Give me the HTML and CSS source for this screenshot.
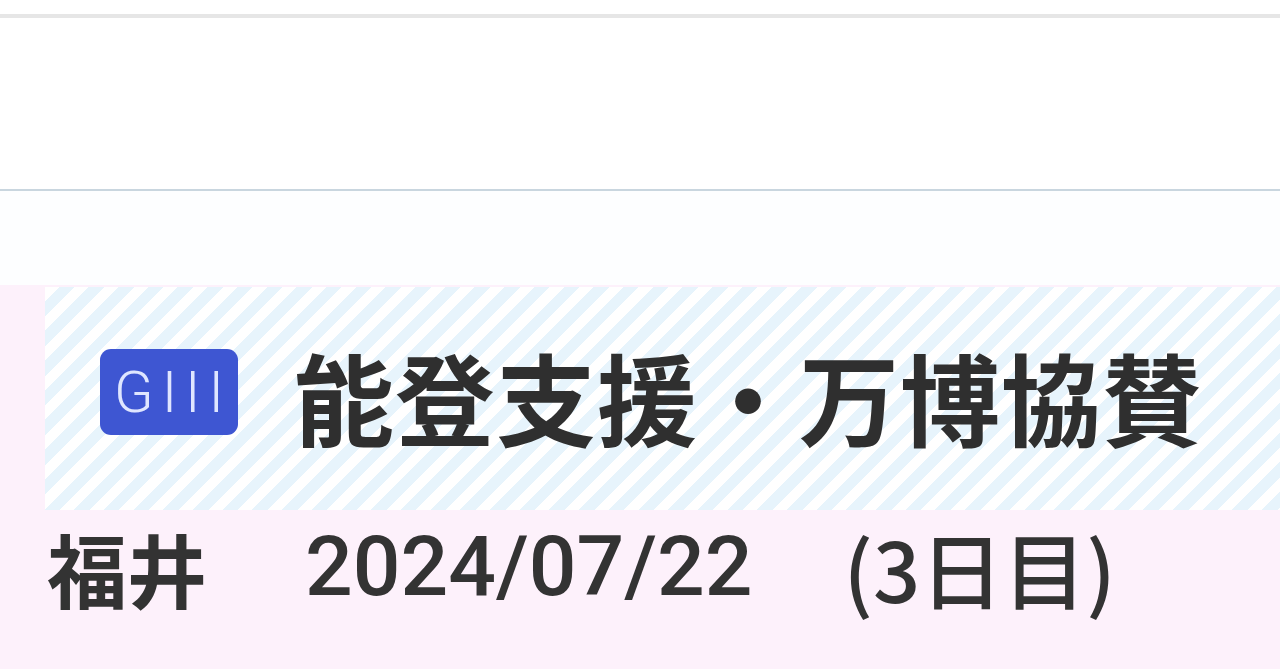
FILE: index.html
```html
<!DOCTYPE html>
<html lang="ja">
<head>
<meta charset="utf-8">
<title>能登支援・万博協賛</title>
<link rel="stylesheet" href="styles.css">
</head>
<body>
  <div class="topbar"></div>
  <div class="header"></div>
  <div class="gap"></div>
  <section class="race">
    <div class="banner">
      <span class="grade">GIII</span>
      <h1 class="title">能登支援・万博協賛</h1>
    </div>
    <div class="info">
      <span class="place">福井</span>
      <span class="date">2024/07/22</span>
      <span class="day">(3日目)</span>
    </div>
  </section>
</body>
</html>
```

FILE: styles.css
```css
html, body {
  margin: 0;
  padding: 0;
  background: #ffffff;
  font-family: "Noto Sans CJK JP", "Noto Sans", sans-serif;
  color: #333333;
  overflow: hidden;
}

.topbar {
  height: 14px;
  border-bottom: 4px solid #e6e6e6;
}

.header {
  height: 171px;
  border-bottom: 2px solid #c9d6df;
}

.gap {
  height: 94px;
  background: #fdfeff;
}

.race {
  background: #fdf1fb;
  height: 384px;
  padding-top: 2px;
  box-sizing: border-box;
}

.banner {
  margin-left: 45px;
  height: 223px;
  display: flex;
  align-items: center;
  padding-left: 55px;
  background: repeating-linear-gradient(
    135deg,
    #ffffff 0 10px,
    #e7f4fc 10px 21px
  );
}

.grade {
  width: 138px;
  height: 86px;
  box-sizing: border-box;
  border-radius: 11px;
  background: #3e56d2;
  color: #dfe6ff;
  font-family: Roboto, "Liberation Sans", sans-serif;
  font-weight: 300;
  font-size: 58px;
  letter-spacing: 8px;
  display: flex;
  align-items: center;
  justify-content: center;
  padding-left: 8px;
  margin-top: -14px;
}

.title {
  margin: -6px 0 0 56px;
  font-size: 100px;
  font-weight: 700;
  line-height: 1;
  color: #2f2f2f;
  letter-spacing: 1px;
}

.info {
  display: flex;
  align-items: center;
  height: 114px;
  padding-left: 47px;
  font-size: 80px;
  line-height: 1;
  color: #333333;
}

.place {
  font-weight: 700;
}

.date {
  margin-left: 98px;
  font-family: Roboto, "Liberation Sans", sans-serif;
  font-weight: 500;
  font-size: 84px;
}

.day {
  margin-left: 91px;
  font-weight: 500;
  font-size: 83px;
}
```
